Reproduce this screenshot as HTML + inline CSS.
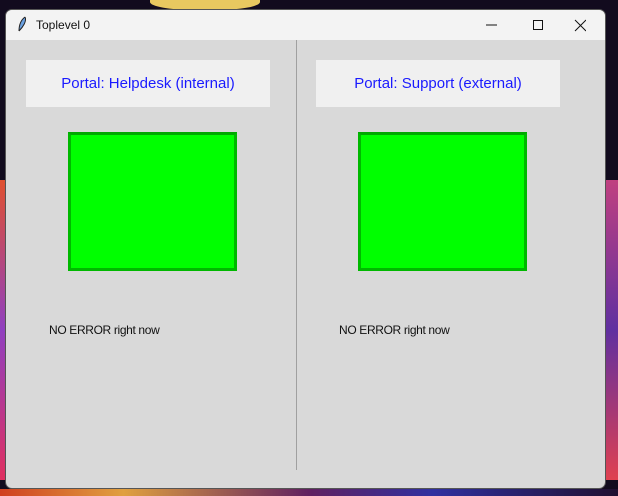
<!DOCTYPE html>
<html><head><style>
body{margin:0;width:618px;height:496px;background:#120b1e;position:relative;overflow:hidden;font-family:"Liberation Sans",sans-serif}
.deco1{position:absolute;left:150px;top:-10px;width:110px;height:20px;background:#e8c860;border-radius:40%}
.deco2{position:absolute;left:0;top:180px;width:8px;height:300px;background:linear-gradient(#e05030,#9040c0,#e03060)}
.deco3{position:absolute;left:606px;top:180px;width:12px;height:300px;background:linear-gradient(#c04080,#6030a0,#e04050)}
.deco4{position:absolute;left:0;top:489px;width:618px;height:7px;background:linear-gradient(90deg,#d04020,#e0a040 20%,#602060 50%,#3030a0 70%,#201030)}
.win{position:absolute;left:5px;top:9px;width:601px;height:480px;background:#d9d9d9;border-radius:7px;overflow:hidden;border:1px solid #555;box-sizing:border-box}
.title{height:30px;background:#f3f3f3;position:relative;font-size:12px;color:#111}
.title span{position:absolute;left:30px;top:8px}
.div{position:absolute;left:290px;top:30px;width:1px;height:430px;background:#a0a0a0}
.lbl{position:absolute;top:50px;width:244px;height:47px;background:#f0f0f0;color:#1a1aff;font-size:15px;text-align:center;line-height:47px}
.g{position:absolute;top:122px;width:169px;height:139px;box-sizing:border-box;background:#00ff00;border:3px solid #00b800;border-top-color:#00a800}
.t{position:absolute;top:313px;font-size:12px;letter-spacing:-0.35px;color:#111}
</style></head><body>
<div class="deco1"></div><div class="deco2"></div><div class="deco3"></div><div class="deco4"></div>
<div class="win">
<div class="title">
<svg style="position:absolute;left:10px;top:6px" width="12" height="18" viewBox="0 0 12 18"><path d="M9 1C5 4 3 9 3 15M9 1C11 5 7 11 3 15" stroke="#222" fill="#6aa0e0" stroke-width="1"/></svg>
<span>Toplevel 0</span>
<svg style="position:absolute;left:480px;top:8px" width="100" height="14"><line x1="0" y1="7" x2="11" y2="7" stroke="#111"/><rect x="47.5" y="2.5" width="9" height="9" fill="none" stroke="#111"/><path d="M89 2L100 13M100 2L89 13" stroke="#111"/></svg>
</div>
<div class="div"></div>
<div class="lbl" style="left:20px">Portal: Helpdesk (internal)</div>
<div class="lbl" style="left:310px">Portal: Support (external)</div>
<div class="g" style="left:62px"></div>
<div class="g" style="left:352px"></div>
<div class="t" style="left:43px">NO ERROR right now</div>
<div class="t" style="left:333px">NO ERROR right now</div>
</div>
</body></html>
